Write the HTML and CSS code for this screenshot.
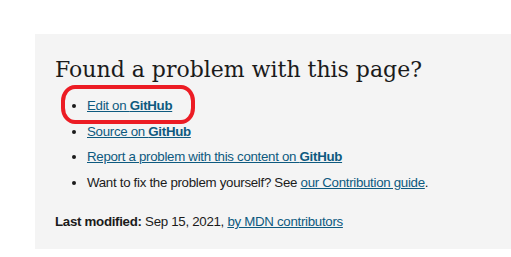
FILE: index.html
```html
<!DOCTYPE html>
<html>
<head>
<meta charset="utf-8">
<link rel="stylesheet" href="styles.css">
</head>
<body>
<section class="feedback">
  <h2 class="title">Found a problem with this page?</h2>
  <ul class="links">
    <li class="item item-marked"><a href="#">Edit on <b>GitHub</b></a><span class="mark"></span></li>
    <li class="item"><a href="#">Source on <b>GitHub</b></a></li>
    <li class="item"><a href="#">Report a problem with this content on <b>GitHub</b></a></li>
    <li class="item">Want to fix the problem yourself? See <a href="#">our Contribution guide</a>.</li>
  </ul>
  <p class="modified"><b>Last modified:</b> Sep 15, 2021, <a href="#">by MDN contributors</a></p>
</section>
</body>
</html>
```
FILE: styles.css
```css
html, body {
  margin: 0;
  padding: 0;
  background: #ffffff;
}
body {
  width: 511px;
  height: 257px;
  overflow: hidden;
  font-family: "Liberation Sans", Arial, sans-serif;
  color: #1b1b1b;
}
.feedback {
  margin: 34px 0 0 35px;
  height: 215px;
  background: #f4f4f4;
  padding: 22px 0 0 20px;
  box-sizing: border-box;
}
.title {
  margin: 0;
  font-family: "DejaVu Serif", serif;
  font-weight: normal;
  font-size: 22px;
  line-height: 28px;
  color: #1b1b1b;
}
.links {
  margin: 12px 0 0 0;
  padding: 0 0 0 32px;
  font-size: 13.3px;
  letter-spacing: -0.3px;
  line-height: 20px;
}
.item {
  margin-bottom: 5.7px;
}
.item-marked {
  position: relative;
}
a {
  color: #0e5a7f;
}
.mark {
  position: absolute;
  left: -26px;
  top: -11px;
  width: 134px;
  height: 39px;
  border: 4px solid #ec1c24;
  border-radius: 14px / 16px;
  box-sizing: border-box;
  pointer-events: none;
}
.modified {
  margin: 19px 0 0 0;
  font-size: 13.3px;
  letter-spacing: -0.3px;
  line-height: 20px;
}
```
